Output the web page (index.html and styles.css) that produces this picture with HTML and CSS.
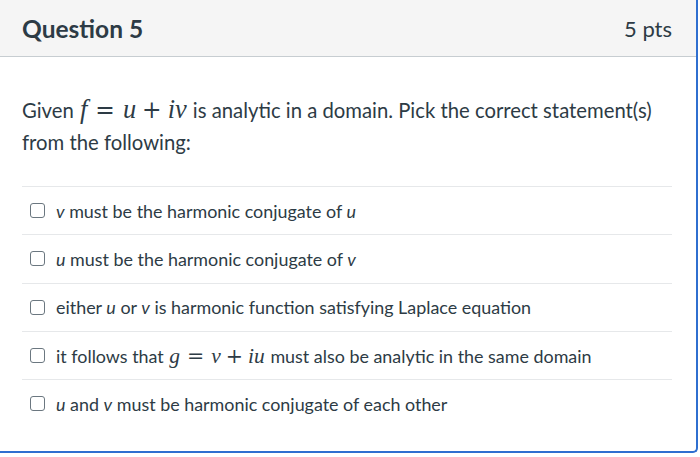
FILE: index.html
```html
<!DOCTYPE html>
<html>
<head>
<meta charset="utf-8">
<link rel="stylesheet" href="styles.css">
</head>
<body>
<div class="card">
  <div class="header">
    <span class="title">Question 5</span>
    <span class="pts">5 pts</span>
  </div>
  <div class="content">
    <div class="question">Given <span class="m">f</span><span class="op rel">=</span><span class="m">u</span><span class="op bin">+</span><span class="m">iv</span> is analytic in a domain. Pick the correct statement(s) from the following:</div>
    <div class="answers">
      <label class="row"><span class="box"></span><span class="txt"><i>v</i> must be the harmonic conjugate of <i>u</i></span></label>
      <label class="row"><span class="box"></span><span class="txt"><i>u</i> must be the harmonic conjugate of <i>v</i></span></label>
      <label class="row"><span class="box"></span><span class="txt">either <i>u</i> or <i>v</i> is harmonic function satisfying Laplace equation</span></label>
      <label class="row"><span class="box"></span><span class="txt">it follows that <span class="m">g</span><span class="op rel">=</span><span class="m">v</span><span class="op bin">+</span><span class="m">iu</span> must also be analytic in the same domain</span></label>
      <label class="row"><span class="box"></span><span class="txt"><i>u</i> and <i>v</i> must be harmonic conjugate of each other</span></label>
    </div>
  </div>
</div>
</body>
</html>
```

FILE: styles.css
```css
html, body {
  margin: 0;
  padding: 0;
  background: #ffffff;
}
body {
  font-family: Lato, "Noto Sans", sans-serif;
  color: #2d3b45;
}
.card {
  width: 698px;
  height: 453px;
  box-sizing: border-box;
  border-right: 2px solid #2f6fd0;
  border-bottom: 2px solid #2f6fd0;
  border-bottom-right-radius: 5px;
  overflow: hidden;
}
.header {
  height: 57px;
  box-sizing: border-box;
  background: #f5f5f5;
  border-bottom: 1px solid #c7cdd1;
  display: flex;
  justify-content: space-between;
  align-items: center;
  padding: 0 24px 0 22px;
}
.title {
  font-size: 24.5px;
  font-weight: 700;
  color: #2d3b45;
}
.pts {
  font-size: 22px;
  font-weight: 400;
  color: #2d3b45;
}
.content {
  padding: 0 24px 0 22px;
}
.question {
  font-size: 20.3px;
  line-height: 32px;
  padding-top: 37px;
  padding-bottom: 28px;
}
.m {
  font-family: "Liberation Serif", "DejaVu Serif", serif;
  font-style: italic;
  font-size: 1.3em;
  padding: 0 1px;
  line-height: 0;
}
.op {
  font-family: "DejaVu Serif", "Liberation Serif", serif;
  font-size: 1.15em;
  line-height: 0;
}
.rel {
  margin: 0 7px;
}
.bin {
  margin: 0 5px;
}
.answers {
  display: flex;
  flex-direction: column;
}
.row {
  display: flex;
  align-items: center;
  height: 48.3px;
  box-sizing: border-box;
  border-top: 1px solid #e6e8ea;
  font-size: 17.9px;
  gap: 11px;
}
.row .m {
  font-size: 1.2em;
}
.row .rel {
  margin: 0 6px;
}
.row .bin {
  margin: 0 4px;
}
.box {
  width: 15px;
  height: 15px;
  box-sizing: border-box;
  border: 1.5px solid #6b7780;
  border-radius: 3px;
  margin-left: 8px;
  flex: none;
}
```
